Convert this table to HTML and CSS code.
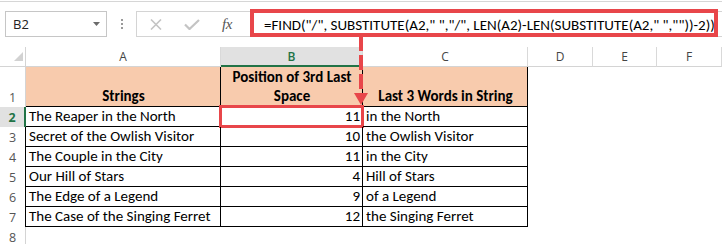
FILE: index.html
```html
<!DOCTYPE html>
<html lang="en">
<head>
<meta charset="utf-8">
<title>Last 3 Words</title>
<link rel="stylesheet" href="styles.css">
</head>
<body>
<div class="sheet">
  <div class="toolbar">
    <div class="namebox">
      <span class="ref">B2</span>
      <svg class="caret" width="7" height="4" viewBox="0 0 7 4"><polygon points="0,0 7,0 3.5,4" fill="#6b6b6b"/></svg>
    </div>
    <div class="grip"><i></i><i></i><i></i></div>
    <div class="fxbtns">
      <svg class="btn-cancel" width="12" height="11" viewBox="0 0 12 11"><path d="M1 0.5 L11 10.5 M11 0.5 L1 10.5" stroke="#c4c4c4" stroke-width="1.6" fill="none"/></svg>
      <svg class="btn-enter" width="16" height="11" viewBox="0 0 16 11"><path d="M1 5.5 L5.5 10 L15 1" stroke="#c4c4c4" stroke-width="2.2" fill="none"/></svg>
      <span class="fx">fx</span>
    </div>
    <div class="formula">=FIND("/", SUBSTITUTE(A2," ","/", LEN(A2)-LEN(SUBSTITUTE(A2," ",""))-2))</div>
  </div>

  <div class="grid">
    <div class="corner"><span class="tri"></span></div>
    <div class="ch">A</div>
    <div class="ch sel">B</div>
    <div class="ch">C</div>
    <div class="ch">D</div>
    <div class="ch">E</div>
    <div class="ch">F</div>

    <div class="rh">1</div>
    <div class="c head">Strings</div>
    <div class="c head">Position of 3rd Last Space</div>
    <div class="c head">Last 3 Words in String</div>
    <div></div><div></div><div></div>

    <div class="rh tb sel">2</div>
    <div class="c">The Reaper in the North</div>
    <div class="c num active">11</div>
    <div class="c">in the North</div>
    <div></div><div></div><div></div>

    <div class="rh tb">3</div>
    <div class="c">Secret of the Owlish Visitor</div>
    <div class="c num">10</div>
    <div class="c">the Owlish Visitor</div>
    <div></div><div></div><div></div>

    <div class="rh tb">4</div>
    <div class="c">The Couple in the City</div>
    <div class="c num">11</div>
    <div class="c">in the City</div>
    <div></div><div></div><div></div>

    <div class="rh tb">5</div>
    <div class="c">Our Hill of Stars</div>
    <div class="c num">4</div>
    <div class="c">Hill of Stars</div>
    <div></div><div></div><div></div>

    <div class="rh tb">6</div>
    <div class="c">The Edge of a Legend</div>
    <div class="c num">9</div>
    <div class="c">of a Legend</div>
    <div></div><div></div><div></div>

    <div class="rh tb">7</div>
    <div class="c">The Case of the Singing Ferret</div>
    <div class="c num">12</div>
    <div class="c">the Singing Ferret</div>
    <div></div><div></div><div></div>

    <div class="rh">8</div>
    <div></div><div></div><div></div><div></div><div></div><div></div>
  </div>

  <!-- highlight around the formula and the arrow down to the result cell -->
  <div class="formula-frame"></div>
  <svg class="pointer" width="18" height="72" viewBox="0 0 18 72">
    <line x1="9" y1="0" x2="9" y2="57" stroke="#e8464a" stroke-width="4" stroke-dasharray="15 4"/>
    <polygon points="2,57 16,57 9,69" fill="#e8464a"/>
  </svg>
</div>
</body>
</html>
```

FILE: styles.css
```css
* {
  box-sizing: border-box;
}

html, body {
  margin: 0;
  padding: 0;
  background: #ffffff;
}

.sheet {
  position: relative;
  width: 722px;
  height: 244px;
  overflow: hidden;
  background: #ffffff;
  font-family: Carlito, Lato, "Liberation Sans", sans-serif;
  color: #000000;
}

/* ---------- formula bar ---------- */
.toolbar {
  margin-top: 1px;
  height: 46px;
  border-top: 1px solid #d6d6d6;
  padding-top: 9px;
  display: flex;
  align-items: flex-start;
}

.namebox {
  margin-left: 5px;
  width: 102px;
  height: 26px;
  border: 1px solid #c6c6c6;
  display: flex;
  align-items: center;
  justify-content: space-between;
  padding: 0 6px 0 7px;
}

.ref {
  font-family: "Open Sans", "Noto Sans", sans-serif;
  font-size: 13px;
  color: #222222;
}

.grip {
  width: 29px;
  height: 26px;
  display: flex;
  flex-direction: column;
  align-items: center;
  justify-content: center;
  gap: 2px;
}

.grip i {
  display: block;
  width: 2px;
  height: 2px;
  background: #9a9a9a;
}

.fxbtns {
  width: 114px;
  height: 26px;
  border: 1px solid #d4d4d4;
  border-right: none;
  display: flex;
  align-items: center;
  padding-left: 13px;
}

.btn-cancel {
  margin-right: 22px;
}

.btn-enter {
  margin-right: 22px;
}

.fx {
  font-family: "Liberation Serif", serif;
  font-style: italic;
  font-size: 15px;
  color: #555555;
  letter-spacing: -0.5px;
}

.formula {
  flex: 1;
  height: 26px;
  border: 1px solid #d4d4d4;
  border-right: none;
  display: flex;
  align-items: center;
  padding: 2px 0 0 13px;
  font-size: 15px;
  white-space: nowrap;
  color: #000000;
}

.formula-frame {
  position: absolute;
  left: 250px;
  top: 9px;
  width: 468px;
  height: 28px;
  border: 4px solid #e8464a;
}

.pointer {
  position: absolute;
  left: 352px;
  top: 36px;
}

/* ---------- worksheet grid ---------- */
.grid {
  display: grid;
  grid-template-columns: 26px 195px 142px 165px 65px 64px 65px;
  grid-template-rows: 20px 40px repeat(7, 20px);
  font-size: 15px;
}

.corner {
  position: relative;
  border-right: 1px solid #d4d4d4;
  border-bottom: 1px solid #d4d4d4;
}

.tri {
  position: absolute;
  right: 2px;
  bottom: 5px;
  width: 0;
  height: 0;
  border-left: 9px solid transparent;
  border-bottom: 9px solid #d2d2d2;
}

.ch {
  border-right: 1px solid #d9d9d9;
  border-bottom: 1px solid #d4d4d4;
  display: flex;
  align-items: center;
  justify-content: center;
  font-family: "Open Sans", "Noto Sans", sans-serif;
  font-size: 12px;
  color: #444444;
}

.ch.sel {
  background: #e1e1e1;
  border-bottom: 2px solid #217346;
  color: #217346;
  font-weight: 600;
}

.rh {
  border-right: 1px solid #d4d4d4;
  display: flex;
  align-items: flex-end;
  justify-content: center;
  font-family: "Open Sans", "Noto Sans", sans-serif;
  font-size: 12.5px;
  line-height: 19px;
  color: #555555;
}

.rh.tb {
  border-right-color: #000000;
}

.rh.sel {
  background: #e1e1e1;
  border-right: 2px solid #217346;
  color: #217346;
  font-weight: 700;
}

.c {
  position: relative;
  border-right: 1px solid #000000;
  border-bottom: 1px solid #000000;
  display: flex;
  align-items: flex-end;
  padding: 0 2px 0 3px;
  line-height: 19px;
  white-space: nowrap;
}

.c.head {
  background: #f8cbad;
  justify-content: center;
  text-align: center;
  font-weight: 700;
  white-space: normal;
}

.c.num {
  justify-content: flex-end;
}

.c.active::after {
  content: "";
  position: absolute;
  left: -2px;
  top: -2px;
  right: -2px;
  bottom: -2px;
  border: 3px solid #e8464a;
}
```
